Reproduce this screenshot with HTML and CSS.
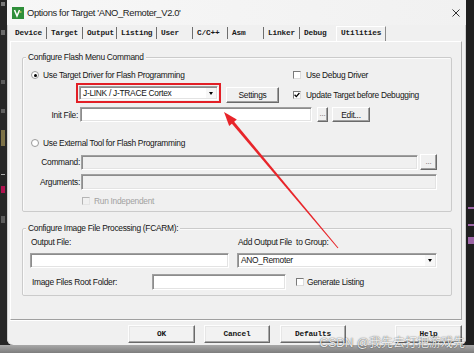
FILE: index.html
```html
<!DOCTYPE html>
<html>
<head>
<meta charset="utf-8">
<link rel="stylesheet" href="styles.css">
</head>
<body>
<div class="screen">
  <div class="bg-left">
    <span class="bl bl1"></span>
    <span class="bl bl2"></span>
    <span class="bl bl3"></span>
    <span class="bl bl4"></span>
    <span class="bl bl5"></span>
    <span class="bl bl6"></span>
    <span class="bl bl7"></span>
    <span class="bl bl8"></span>
  </div>
  <div class="dialog">
    <div class="titlebar">
      <svg class="app-icon" width="12" height="12" viewBox="0 0 12 12">
        <rect x="0" y="0" width="12" height="12" fill="#2f8f3a"/>
        <path d="M2.5 3 L5 9 L7.5 3" fill="none" stroke="#fff" stroke-width="1.5"/>
        <path d="M7.5 5 L9.5 5" stroke="#e8d36a" stroke-width="1.2"/>
      </svg>
      <span class="title">Options for Target 'ANO_Remoter_V2.0'</span>
      <svg class="close" width="8" height="8" viewBox="0 0 8 8">
        <path d="M0.5 0.5 L7.5 7.5 M7.5 0.5 L0.5 7.5" stroke="#333" stroke-width="1"/>
      </svg>
    </div>
    <div class="tabs">
      <span class="tab t36">Device</span>
      <span class="tab t36">Target</span>
      <span class="tab t34">Output</span>
      <span class="tab t40">Listing</span>
      <span class="tab t36">User</span>
      <span class="tab t35">C/C++</span>
      <span class="tab t36">Asm</span>
      <span class="tab t36">Linker</span>
      <span class="tab t36 nosep">Debug</span>
      <span class="tab t50 active">Utilities</span>
    </div>
    <div class="panel">
      <div class="group g1">
        <span class="legend">Configure Flash Menu Command</span>
        <div class="row r1">
          <div class="cell270">
            <span class="radio on"></span><span class="lbl">Use Target Driver for Flash Programming</span>
          </div>
          <div class="check-item">
            <span class="check"></span><span class="lbl lbl-c">Use Debug Driver</span>
          </div>
        </div>
        <div class="row r2">
          <div class="cell270 r2left">
            <div class="hilite">
              <div class="combo c-jlink">
                <span class="combo-text">J-LINK / J-TRACE Cortex</span>
                <span class="combo-btn"></span>
              </div>
            </div>
            <span class="btn settings">Settings</span>
          </div>
          <div class="check-item r2right">
            <span class="check">
              <svg width="6" height="6" viewBox="0 0 6 6"><path d="M0.6 2.8 L2.3 4.6 L5.4 1" fill="none" stroke="#000" stroke-width="1.3"/></svg>
            </span><span class="lbl lbl-c">Update Target before Debugging</span>
          </div>
        </div>
        <div class="row r3">
          <span class="rlabel w55">Init File:</span>
          <span class="input i-init"></span>
          <span class="btn dots d-init">...</span>
          <span class="btn edit">Edit...</span>
        </div>
        <div class="row r4">
          <span class="radio"></span><span class="lbl">Use External Tool for Flash Programming</span>
        </div>
        <div class="row r5">
          <span class="rlabel w57">Command:</span>
          <span class="input disabled i-cmd"></span>
          <span class="btn dots d-cmd">...</span>
        </div>
        <div class="row r6">
          <span class="rlabel w57">Arguments:</span>
          <span class="input disabled i-args"></span>
        </div>
        <div class="row r7">
          <span class="check disabled"></span><span class="lbl lbl-dis">Run Independent</span>
        </div>
      </div>
      <div class="group g2">
        <span class="legend">Configure Image File Processing (FCARM):</span>
        <div class="row ra">
          <span class="cell215">Output File:</span>
          <span>Add Output File&nbsp; to Group:</span>
        </div>
        <div class="row rb">
          <span class="input i-out"></span>
          <div class="combo c-group">
            <span class="combo-text">ANO_Remoter</span>
            <span class="combo-btn"></span>
          </div>
        </div>
        <div class="row rc">
          <span class="cell129">Image Files Root Folder:</span>
          <span class="input i-root"></span>
          <span class="check c-gen"></span><span class="lbl lbl-g">Generate Listing</span>
        </div>
      </div>
    </div>
    <div class="buttons">
      <span class="dbtn b-ok">OK</span>
      <span class="dbtn b-cancel">Cancel</span>
      <span class="dbtn b-def">Defaults</span>
      <span class="dbtn b-help">Help</span>
    </div>
  </div>
  <div class="bg-right">
    <span class="br br1"></span>
    <span class="br br2"></span>
    <span class="br br3"></span>
  </div>
</div>
<div class="taskbar"></div>
<svg class="arrow" width="474" height="353" viewBox="0 0 474 353">
  <polygon points="233.15,120.54 338.38,247.68 337.62,248.32 230.85,122.46" fill="#e8252a"/>
  <polygon points="224,112 236.8,119.5 229.2,125.9" fill="#e8252a"/>
</svg>
<div class="watermark">CSDN @我先去打把游戏先</div>
</body>
</html>
```

FILE: styles.css
```css
* { box-sizing: border-box; }
html, body { margin: 0; padding: 0; }
body {
  width: 474px;
  height: 353px;
  overflow: hidden;
  position: relative;
  background: #262626;
  font-family: "Liberation Sans", Arial, sans-serif;
  font-size: 8.4px;
  letter-spacing: -0.28px;
  color: #151515;
}
.screen { display: flex; height: 345px; }

.bg-left { width: 7px; background: #262626; display: flex; flex-direction: column; }
.bl { display: block; width: 4px; margin-left: 1px; }
.bl1 { height: 4px; margin-top: 2px; background: #7a7a7a; }
.bl2 { height: 5px; margin-top: 24px; background: #6a6a6a; }
.bl3 { height: 4px; margin-top: 45px; background: #5a5a5a; }
.bl4 { height: 4px; margin-top: 25px; background: #5e5e5e; }
.bl5 { height: 16px; margin-top: 17px; background: #7d7248; }
.bl6 { height: 1px; margin-top: 28px; background: #aaa; }
.bl7 { height: 7px; margin-top: 11px; background: #b0124f; }
.bl8 { height: 7px; margin-top: 23px; background: #5c5c5c; }

.bg-right { width: 8px; background: #1f1f1f; display: flex; flex-direction: column; align-items: flex-end; }
.br { display: block; width: 6px; background: #9c66a6; }
.br1 { height: 2px; margin-top: 207px; }
.br2 { height: 2px; margin-top: 15px; }
.br3 { height: 7px; margin-top: 11px; }

.dialog {
  width: 459px;
  height: 345px;
  background: #f0f0f0;
  border-radius: 0 0 6px 6px;
  display: flex;
  flex-direction: column;
  box-shadow: inset 1px 0 0 #cfcfcf, inset -1px 0 0 #cfcfcf;
}

.titlebar {
  height: 25px;
  display: flex;
  align-items: center;
  padding-left: 5px;
  background: linear-gradient(90deg, #f7f7f7, #f1f1f1);
}
.app-icon { margin-right: 3px; }
.title { font-size: 9.4px; letter-spacing: -0.35px; color: #1c1c1c; }
.close { margin-left: auto; margin-right: 6px; }

.tabs {
  height: 16px;
  display: flex;
  align-items: flex-start;
  padding-left: 4px;
  font-family: "Liberation Mono", "DejaVu Sans Mono", monospace;
  font-weight: bold;
  font-size: 7.8px;
  letter-spacing: -0.2px;
  color: #1a1a1a;
}
.tab {
  height: 12px;
  margin-top: 2px;
  line-height: 12px;
  padding-left: 4px;
  border-right: 1px solid #6e6e6e;
  white-space: nowrap;
}
.tab.nosep { border-right-color: transparent; }
.t34 { width: 34px; }
.t35 { width: 35px; }
.t36 { width: 36px; }
.t40 { width: 40px; }
.t50 { width: 50px; }
.tab.active {
  height: 15px;
  margin-top: 1px;
  line-height: 13px;
  padding-left: 4px;
  border-top: 1px solid #fff;
  border-left: 1px solid #fff;
  border-right: 1px solid #8a8a8a;
  background: #f0f0f0;
  position: relative;
  z-index: 1;
}

.panel {
  margin-left: 3px;
  width: 452px;
  height: 279px;
  border: 1px solid;
  border-color: #fff #a8a8a8 #a0a0a0 #fff;
  box-shadow: 0 1px 0 #fff;
  padding: 15px 0 0 11px;
  display: flex;
  flex-direction: column;
}

.group {
  position: relative;
  width: 430px;
  border: 1px solid #cbcbcb;
  border-radius: 2px;
  box-shadow: inset 1px 1px 0 #fbfbfb;
  display: flex;
  flex-direction: column;
}
.g1 { height: 155px; }
.g2 { height: 68px; margin-top: 16px; }
.legend {
  position: absolute;
  left: 3px;
  top: -6px;
  padding: 0 2px 0 2px;
  line-height: 11px;
  background: #f0f0f0;
  white-space: nowrap;
}

.row { display: flex; align-items: center; white-space: nowrap; }
.cell270 { width: 270px; display: flex; align-items: center; }
.cell215 { width: 215px; padding-left: 8px; }
.cell129 { width: 129px; padding-left: 9px; }

.r1 { height: 12px; margin-top: 11px; }
.r1 .cell270 { padding-left: 8px; }
.r2 { height: 20px; margin-top: 2px; align-items: stretch; }
.r3 { height: 15px; margin-top: 4px; }
.r4 { height: 12px; margin-top: 15px; padding-left: 8px; }
.r5 { height: 16px; margin-top: 5px; }
.r6 { height: 16px; margin-top: 4px; }
.r7 { height: 9px; margin-top: 6px; padding-left: 59px; }
.ra { height: 10px; margin-top: 8px; }
.rb { height: 15px; margin-top: 6px; }
.rc { height: 16px; margin-top: 6px; }

.lbl { margin-left: 4px; }
.lbl-c { margin-left: 5px; }
.lbl-g { margin-left: 3px; }
.lbl-dis { color: #a2a2a2; }

.rlabel { text-align: right; }
.w55 { width: 55px; }
.w57 { width: 57px; }

.radio {
  width: 8px;
  height: 8px;
  border-radius: 50%;
  border: 1px solid #9a9a9a;
  background: #fff;
  display: flex;
  align-items: center;
  justify-content: center;
  flex: none;
}
.radio.on::after {
  content: "";
  width: 3px;
  height: 3px;
  border-radius: 50%;
  background: #000;
}

.check {
  width: 8px;
  height: 8px;
  border: 1px solid;
  border-color: #7a7a7a #dcdcdc #dcdcdc #7a7a7a;
  background: #fff;
  display: flex;
  align-items: center;
  justify-content: center;
  flex: none;
}
.check.disabled { background: #f0f0f0; border-color: #b4b4b4 #e4e4e4 #e4e4e4 #b4b4b4; }
.c-gen { margin-left: 10px; }

.check-item { display: flex; align-items: center; }
.r2left { align-items: stretch; }
.r2right { align-self: flex-end; height: 16px; }

.hilite {
  margin-left: 53px;
  width: 145px;
  height: 20px;
  border: 2px solid #e21f26;
  padding: 1px;
}

.input {
  display: block;
  height: 15px;
  background: #fff;
  border: 1px solid;
  border-color: #a0a0a0 #fff #fff #a0a0a0;
  box-shadow: inset 1px 1px 0 #8c8c8c, inset -1px -1px 0 #e3e3e3;
  flex: none;
}
.input.disabled { background: #f0f0f0; }
.i-init { width: 232px; margin-left: 2px; }
.i-cmd { width: 337px; margin-left: 1px; }
.i-args { width: 356px; height: 16px; margin-left: 1px; }
.i-out { width: 199px; margin-left: 7px; }
.i-root { width: 134px; height: 16px; }

.combo {
  display: flex;
  align-items: stretch;
  background: #fff;
  border: 1px solid;
  border-color: #a0a0a0 #fff #fff #a0a0a0;
  box-shadow: inset 1px 1px 0 #8c8c8c, inset -1px -1px 0 #e3e3e3;
  flex: none;
}
.c-jlink { width: 139px; height: 14px; }
.c-group { width: 200px; height: 15px; margin-left: 8px; }
.combo-text { flex: 1; padding-left: 3px; line-height: 12px; }
.combo-btn {
  width: 10px;
  margin: 1px 1px 1px 0;
  background: #f7f7f7;
  display: flex;
  align-items: center;
  justify-content: center;
}
.combo-btn::after {
  content: "";
  border-left: 2.5px solid transparent;
  border-right: 2.5px solid transparent;
  border-top: 3px solid #000;
}

.btn {
  display: flex;
  align-items: center;
  justify-content: center;
  background: #f0f0f0;
  border: 1px solid;
  border-color: #fff #6a6a6a #6a6a6a #fff;
  box-shadow: inset -1px -1px 0 #a0a0a0;
  flex: none;
}
.settings { width: 53px; height: 16px; margin-left: 5px; align-self: flex-end; }
.dots { color: #666; font-size: 8px; padding-bottom: 2px; }
.d-init { width: 11px; height: 15px; margin-left: 5px; }
.d-cmd { width: 17px; height: 16px; margin-left: 2px; }
.edit { width: 38px; height: 15px; margin-left: 4px; }

.buttons {
  height: 18px;
  margin-top: 5px;
  display: flex;
  padding-left: 121px;
  font-family: "Liberation Mono", "DejaVu Sans Mono", monospace;
  font-weight: bold;
  font-size: 7.8px;
  letter-spacing: -0.2px;
}
.dbtn {
  display: flex;
  align-items: center;
  justify-content: center;
  height: 18px;
  background: #f2f2f2;
  border: 1px solid;
  border-color: #fdfdfd #6a6a6a #6a6a6a #fdfdfd;
  box-shadow: inset -1px -1px 0 #a8a8a8, inset 1px 1px 0 #e6e6e6;
}
.b-ok { width: 67px; }
.b-cancel { width: 66px; margin-left: 9px; }
.b-def { width: 66px; margin-left: 10px; }
.b-help { width: 67px; margin-left: 49px; }

.taskbar {
  height: 8px;
  background: linear-gradient(180deg, #a9a9a9, #7d7d7d);
}

.arrow { position: absolute; left: 0; top: 0; pointer-events: none; }

.watermark {
  position: absolute;
  right: 9px;
  top: 336px;
  font-family: "Liberation Sans", "Noto Sans CJK SC", sans-serif;
  font-size: 12px;
  line-height: 14px;
  letter-spacing: 0;
  color: rgba(255, 255, 255, 0.9);
  text-shadow: 0 0 1px rgba(0, 0, 0, 0.6), 0 0 2px rgba(0, 0, 0, 0.3);
  white-space: nowrap;
}
```
